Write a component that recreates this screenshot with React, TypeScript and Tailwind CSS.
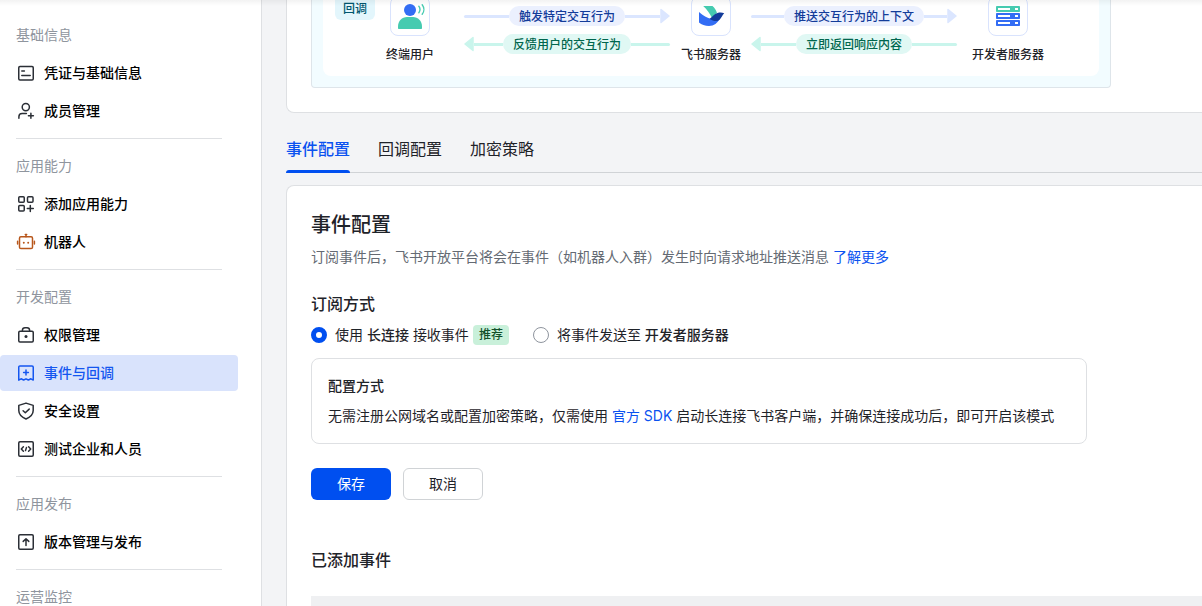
import type { ReactNode } from "react";

type NavItem = { label: string; icon: ReactNode; active?: boolean };
type NavSection = { title: string; items: NavItem[] };

function Glyph({ children, className = "text-[#2b2f36]" }: { children: ReactNode; className?: string }) {
  return (
    <svg
      viewBox="0 0 20 20"
      fill="none"
      stroke="currentColor"
      strokeWidth="1.5"
      strokeLinecap="round"
      strokeLinejoin="round"
      aria-hidden="true"
      className={`size-5 shrink-0 ${className}`}
    >
      {children}
    </svg>
  );
}

const sections: NavSection[] = [
  {
    title: "基础信息",
    items: [
      {
        label: "凭证与基础信息",
        icon: (
          <Glyph>
            <rect x="2.75" y="3.5" width="14.5" height="13.5" rx="1.2" />
            <path d="M5.8 8H8.4M5.8 12.5H14.2" />
          </Glyph>
        ),
      },
      {
        label: "成员管理",
        icon: (
          <Glyph>
            <circle cx="9.8" cy="6.1" r="3.6" />
            <path d="M2.9 17.2v-1.4c0-1.8 1.4-3.2 3.2-3.2h4.3M14.9 12.2v5M12.4 14.7h5" />
          </Glyph>
        ),
      },
    ],
  },
  {
    title: "应用能力",
    items: [
      {
        label: "添加应用能力",
        icon: (
          <Glyph>
            <rect x="2.75" y="2.75" width="5.5" height="5.5" rx="1" />
            <rect x="11.5" y="2.75" width="5.5" height="5.5" rx="1" />
            <rect x="2.75" y="11.5" width="5.5" height="5.5" rx="1" />
            <path d="M14.3 11.4v6M11.3 14.4h6" />
          </Glyph>
        ),
      },
      {
        label: "机器人",
        icon: (
          <Glyph className="text-[#b8571c]">
            <rect x="3.5" y="4.8" width="13" height="11.8" rx="1.4" />
            <path d="M10 4.8V2.5M9.3 2.6h1.4M1.6 9.2v2.8M18.4 9.2v2.8" />
            <path d="M7.8 10.6v.2M12.2 10.6v.2" strokeWidth="1.9" />
          </Glyph>
        ),
      },
    ],
  },
  {
    title: "开发配置",
    items: [
      {
        label: "权限管理",
        icon: (
          <Glyph>
            <rect x="2.75" y="6.2" width="14.5" height="10.8" rx="1.2" />
            <path d="M6.4 6v-.7A2.6 2.6 0 0 1 9 2.8h2a2.6 2.6 0 0 1 2.6 2.5V6" />
            <circle cx="10" cy="11.4" r="1.5" fill="currentColor" stroke="none" />
          </Glyph>
        ),
      },
      {
        label: "事件与回调",
        active: true,
        icon: (
          <Glyph className="text-[#1456f0]">
            <path d="M2.75 17.1V4.2c0-.7.5-1.2 1.2-1.2h12.1c.7 0 1.2.5 1.2 1.2v12.9l-2.3-1.3-2.6 1.2-2.35-1.2-2.35 1.2-2.6-1.2z" />
            <path d="M10 7.1v4.8M7.6 9.5h4.8" />
          </Glyph>
        ),
      },
      {
        label: "安全设置",
        icon: (
          <Glyph>
            <path d="M10 2.1l7.2 2.3v5.2c0 3.7-2.7 6.5-7.2 8.4-4.5-1.900-7.200-4.700-7.200-8.400V4.400z" />
            <path d="M7.1 9.700l2.200 2.100 3.900-3.700" />
          </Glyph>
        ),
      },
      {
        label: "测试企业和人员",
        icon: (
          <Glyph>
            <rect x="2.75" y="2.75" width="14.5" height="14.5" rx="1.2" />
            <path d="M7.4 7.800L5.300 10l2.100 2.200M12.600 7.800l2.100 2.200-2.100 2.200M10.500 8.400l-1 3.200" />
          </Glyph>
        ),
      },
    ],
  },
  {
    title: "应用发布",
    items: [
      {
        label: "版本管理与发布",
        icon: (
          <Glyph>
            <rect x="2.75" y="2.75" width="14.5" height="14.5" rx="1.2" />
            <path d="M10 13.4V7M7.2 9.4L10 6.7l2.8 2.7" />
          </Glyph>
        ),
      },
    ],
  },
  { title: "运营监控", items: [] },
];

function Sidebar() {
  return (
    <nav className="w-[262px] shrink-0 overflow-hidden border-r border-[#dee0e3] bg-white pt-2">
      {sections.map((section) => (
        <section key={section.title}>
          <div className="flex flex-col gap-0.5 py-[9px]">
            <h2 className="flex h-9 items-center pl-4 text-sm text-[#8f959e]">{section.title}</h2>
            {section.items.map((item) => (
              <a
                key={item.label}
                href="#"
                aria-current={item.active ? "page" : undefined}
                className={`mr-[23px] flex h-9 items-center gap-2 rounded pl-4 text-sm font-medium ${
                  item.active ? "bg-[#d9e3fc] text-[#1456f0]" : "text-black"
                }`}
              >
                {item.icon}
                {item.label}
              </a>
            ))}
          </div>
          <div className="mr-[39px] ml-4 h-px bg-[#dee0e3]" />
        </section>
      ))}
    </nav>
  );
}

function Party({ name, children }: { name: string; children: ReactNode }) {
  return (
    <div className="flex shrink-0 flex-col items-center">
      <div className="flex size-10 items-center justify-center rounded-lg border border-[#d9e3fd] bg-white">
        {children}
      </div>
      <span className="mt-2 h-5 text-xs leading-[22px] font-medium whitespace-nowrap text-[#1f2329]">{name}</span>
    </div>
  );
}

function Exchange({ request, response }: { request: string; response: string }) {
  return (
    <div className="mt-[10px] flex w-[206px] shrink-0 flex-col gap-2">
      <div className="flex h-5 items-center">
        <span className="h-[3px] flex-1 rounded-l-full bg-[#dbe6ff]" />
        <span className="h-5 rounded-full bg-[#ebf0fe] px-[10px] text-xs leading-[22px] font-medium text-[#133c9a]">
          {request}
        </span>
        <span className="flex flex-1 items-center">
          <span className="h-[3px] flex-1 bg-[#dbe6ff]" />
          <svg viewBox="0 0 10 16" className="h-4 w-[10px] text-[#dbe6ff]" aria-hidden="true">
            <path
              d="M1 1.5L9 8l-8 6.5z"
              fill="currentColor"
              stroke="currentColor"
              strokeWidth="1.5"
              strokeLinejoin="round"
            />
          </svg>
        </span>
      </div>
      <div className="flex h-5 items-center">
        <span className="flex flex-1 items-center">
          <svg viewBox="0 0 10 16" className="h-4 w-[10px] text-[#c9f5ec]" aria-hidden="true">
            <path
              d="M9 1.5L1 8l8 6.5z"
              fill="currentColor"
              stroke="currentColor"
              strokeWidth="1.5"
              strokeLinejoin="round"
            />
          </svg>
          <span className="h-[3px] flex-1 bg-[#c9f5ec]" />
        </span>
        <span className="h-5 rounded-full bg-[#e0f8f4] px-[10px] text-xs leading-[22px] font-medium text-[#00664d]">
          {response}
        </span>
        <span className="h-[3px] flex-1 rounded-r-full bg-[#c9f5ec]" />
      </div>
    </div>
  );
}

function CallbackDiagram() {
  return (
    <div className="max-w-[800px] rounded-b border border-t-0 border-[#dee5ea] bg-[#f2fcff] px-[11px] pb-[11px]">
      <div className="flex items-start rounded-b-lg bg-white pb-3 pl-3">
        <span className="h-6 w-10 shrink-0 rounded-b-md bg-[#e3f6fc] text-center text-xs leading-[26px] font-medium text-[#00566e]">
          回调
        </span>
        <div className="ml-[11px]">
          <Party name="终端用户">
            <svg viewBox="0 0 30 30" className="size-[30px]" aria-hidden="true">
              <circle cx="15" cy="9" r="6" fill="#336df4" />
              <path d="M3 27v-1.500C3 20 7 16 12 16h6c5 0 9 4 9 9.500V27c0 .6-.4 1-1 1H4c-.6 0-1-.4-1-1z" fill="#46cbb0" />
              <path
                d="M23.800 5.200c1.300 1.800 1.300 4.800 0 6.600M27.200 3.800c2.200 2.800 2.200 6.800 0 9.400"
                fill="none"
                stroke="#46cbb0"
                strokeWidth="1.4"
                strokeLinecap="round"
              />
            </svg>
          </Party>
        </div>
        <div className="ml-[30px]">
          <Exchange request="触发特定交互行为" response="反馈用户的交互行为" />
        </div>
        <div className="ml-[11px]">
          <Party name="飞书服务器">
            <svg viewBox="0 0 30 30" className="size-[30px]" aria-hidden="true">
              <path d="M7.200 5h9.300c2.200 2 3.700 4.300 4.500 7l-5 5C13.800 12.500 11.200 8.500 7.200 5z" fill="#46cbb0" />
              <path d="M3 11c4 3.800 8.200 6.200 12.500 7 3.500.6 6 .2 8.500-1-2.400 5.200-6 8-11 8-4 0-7.500-1.200-10-3.500z" fill="#336df4" />
              <path d="M13.500 18c3-2 4.700-4.800 8-5.900 2.200-.7 4.500-.6 6.700.1-1.900 2-2.700 4.400-4.400 6.300-2.300 2.500-6.500 1.800-10.300-.5z" fill="#133c9a" />
            </svg>
          </Party>
        </div>
        <div className="ml-[10px]">
          <Exchange request="推送交互行为的上下文" response="立即返回响应内容" />
        </div>
        <div className="ml-[15px]">
          <Party name="开发者服务器">
            <svg viewBox="0 0 30 30" className="size-[30px]" aria-hidden="true">
              <rect x="3" y="5" width="24" height="6" rx=".8" fill="#46cbb0" />
              <rect x="3" y="12" width="24" height="6" rx=".8" fill="#336df4" />
              <rect x="3" y="19" width="24" height="6" rx=".8" fill="#336df4" />
              <path
                d="M5 7h12v2H5zM22 7h3v2h-3zM5 14h12v2H5zM22 14h3v2h-3zM5 21h12v2H5zM22 21h3v2h-3z"
                fill="#fff"
              />
            </svg>
          </Party>
        </div>
      </div>
    </div>
  );
}

const tabs = ["事件配置", "回调配置", "加密策略"];

function Tabs() {
  return (
    <div role="tablist" className="mt-3 flex h-12 gap-7 border-b border-[#d0d3d6]">
      {tabs.map((tab, i) => (
        <button
          key={tab}
          type="button"
          role="tab"
          aria-selected={i === 0}
          className={`relative h-12 text-base ${i === 0 ? "font-medium text-[#0a52f0]" : "text-[#1f2329]"}`}
        >
          {tab}
          {i === 0 && <span className="absolute inset-x-0 bottom-0 h-[3px] rounded-t bg-[#004ff0]" />}
        </button>
      ))}
    </div>
  );
}

const radioClass =
  "size-4 shrink-0 appearance-none rounded-full border border-[#8f959e] bg-white checked:border-5 checked:border-[#004ff0]";

function EventConfig() {
  return (
    <section className="mt-3 rounded-tl-lg border-t border-l border-[#dee0e3] bg-white pt-6 pl-6 text-sm leading-[22px] text-[#1f2329]">
      <h1 className="text-xl leading-[30px] font-medium">事件配置</h1>
      <p className="mt-1.5 text-[#646a73]">
        订阅事件后，飞书开放平台将会在事件（如机器人入群）发生时向请求地址推送消息{" "}
        <a href="#" className="text-[#0a52f0]">了解更多</a>
      </p>

      <h2 className="mt-6 text-base leading-6 font-medium">订阅方式</h2>
      <div className="mt-2 flex items-center gap-6">
        <label className="flex items-center gap-2">
          <input type="radio" name="mode" defaultChecked className={radioClass} />
          <span className="flex items-center gap-1">
            <span>
              使用 <span className="font-medium">长连接</span> 接收事件
            </span>
            <span className="rounded bg-[#c9f0da] px-1.5 text-xs leading-5 font-medium text-[#13502b]">推荐</span>
          </span>
        </label>
        <label className="flex items-center gap-2">
          <input type="radio" name="mode" className={radioClass} />
          <span>
            将事件发送至 <span className="font-medium">开发者服务器</span>
          </span>
        </label>
      </div>

      <div className="mt-3 max-w-[776px] rounded-lg border border-[#dee0e3] p-4">
        <h3 className="font-medium">配置方式</h3>
        <p className="mt-2">
          无需注册公网域名或配置加密策略，仅需使用{" "}
          <a href="#" className="text-[#0a52f0]">官方 SDK</a>{" "}
          启动长连接飞书客户端，并确保连接成功后，即可开启该模式
        </p>
      </div>

      <div className="mt-6 flex gap-3">
        <button type="button" className="h-8 w-20 rounded-md bg-[#004ff0] text-white">保存</button>
        <button type="button" className="h-8 w-20 rounded-md border border-[#d0d3d6] bg-white">取消</button>
      </div>

      <h2 className="mt-12 text-base leading-6 font-medium">已添加事件</h2>
      <div className="mt-6 h-10 bg-[#eff0f2]" />
    </section>
  );
}

export default function App() {
  return (
    <div className="relative flex h-screen overflow-hidden bg-[#f3f4f6] font-['Inter','Noto_Sans_CJK_SC',sans-serif]">
      <div className="absolute inset-x-0 top-0 z-10 h-1.5 bg-linear-to-b from-black/5 to-transparent" />
      <Sidebar />
      <main className="min-w-0 flex-1 overflow-hidden pl-6">
        <div className="-mt-1">
          <section className="rounded-bl-lg border-b border-l border-[#dee0e3] bg-white pb-6 pl-6">
            <CallbackDiagram />
          </section>
          <Tabs />
          <EventConfig />
        </div>
      </main>
    </div>
  );
}
